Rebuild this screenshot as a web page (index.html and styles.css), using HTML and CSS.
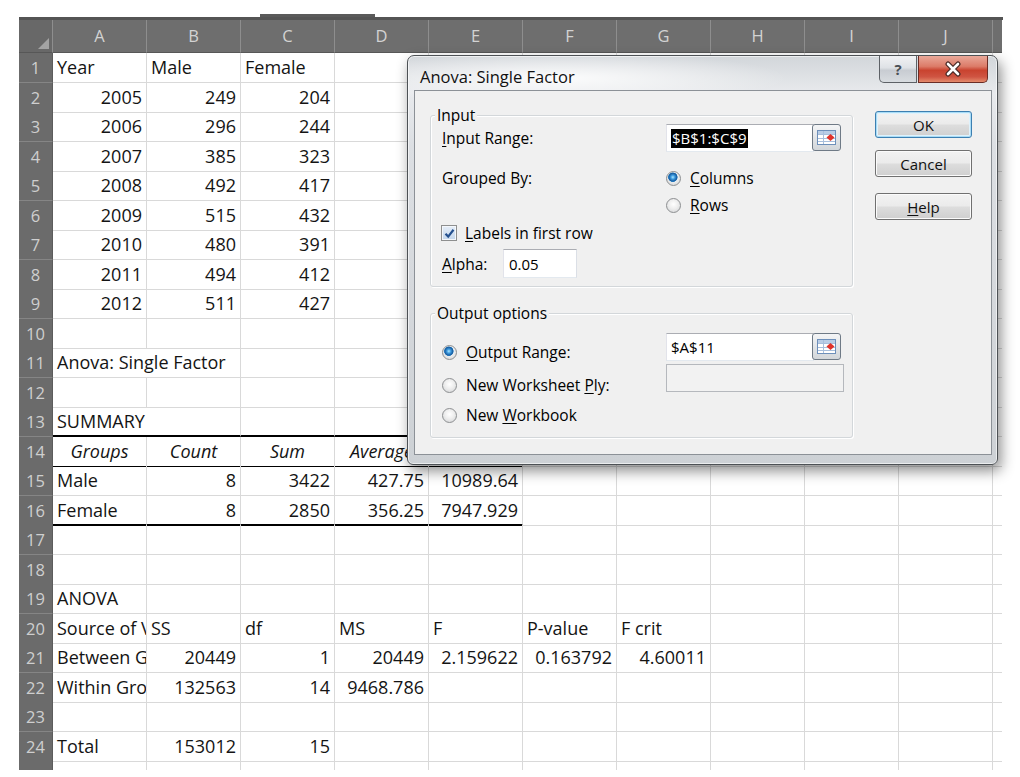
FILE: index.html
```html
<!DOCTYPE html>
<html>
<head>
<meta charset="utf-8">
<title>Anova: Single Factor</title>
<link rel="stylesheet" href="styles.css">
</head>
<body>
<div class="top"><div class="tabedge"></div></div>
<div class="sheet">
  <div class="r hd"><span class="corner"><svg width="11" height="11" viewBox="0 0 11 11"><polygon points="11,0 11,11 0,11" fill="#a3a3a3"/></svg></span><span>A</span><span>B</span><span>C</span><span>D</span><span>E</span><span>F</span><span>G</span><span>H</span><span>I</span><span>J</span><span></span></div>
  <div class="r"><b>1</b><span>Year</span><span>Male</span><span>Female</span><span></span><span></span><span></span><span></span><span></span><span></span><span></span><span></span></div>
  <div class="r"><b>2</b><span class="n">2005</span><span class="n">249</span><span class="n">204</span><span></span><span></span><span></span><span></span><span></span><span></span><span></span><span></span></div>
  <div class="r"><b>3</b><span class="n">2006</span><span class="n">296</span><span class="n">244</span><span></span><span></span><span></span><span></span><span></span><span></span><span></span><span></span></div>
  <div class="r"><b>4</b><span class="n">2007</span><span class="n">385</span><span class="n">323</span><span></span><span></span><span></span><span></span><span></span><span></span><span></span><span></span></div>
  <div class="r"><b>5</b><span class="n">2008</span><span class="n">492</span><span class="n">417</span><span></span><span></span><span></span><span></span><span></span><span></span><span></span><span></span></div>
  <div class="r"><b>6</b><span class="n">2009</span><span class="n">515</span><span class="n">432</span><span></span><span></span><span></span><span></span><span></span><span></span><span></span><span></span></div>
  <div class="r"><b>7</b><span class="n">2010</span><span class="n">480</span><span class="n">391</span><span></span><span></span><span></span><span></span><span></span><span></span><span></span><span></span></div>
  <div class="r"><b>8</b><span class="n">2011</span><span class="n">494</span><span class="n">412</span><span></span><span></span><span></span><span></span><span></span><span></span><span></span><span></span></div>
  <div class="r"><b>9</b><span class="n">2012</span><span class="n">511</span><span class="n">427</span><span></span><span></span><span></span><span></span><span></span><span></span><span></span><span></span></div>
  <div class="r"><b>10</b><span></span><span></span><span></span><span></span><span></span><span></span><span></span><span></span><span></span><span></span><span></span></div>
  <div class="r"><b>11</b><span class="s2">Anova: Single Factor</span><span></span><span></span><span></span><span></span><span></span><span></span><span></span><span></span><span></span></div>
  <div class="r"><b>12</b><span></span><span></span><span></span><span></span><span></span><span></span><span></span><span></span><span></span><span></span><span></span></div>
  <div class="r"><b>13</b><span class="s2 tb">SUMMARY</span><span class="tb"></span><span class="tb"></span><span class="tb"></span><span></span><span></span><span></span><span></span><span></span><span></span></div>
  <div class="r"><b>14</b><span class="h tn">Groups</span><span class="h tn">Count</span><span class="h tn">Sum</span><span class="h tn">Average</span><span class="h tn">Variance</span><span></span><span></span><span></span><span></span><span></span><span></span></div>
  <div class="r"><b>15</b><span>Male</span><span class="n">8</span><span class="n">3422</span><span class="n">427.75</span><span class="n">10989.64</span><span></span><span></span><span></span><span></span><span></span><span></span></div>
  <div class="r"><b>16</b><span class="tb">Female</span><span class="n tb">8</span><span class="n tb">2850</span><span class="n tb">356.25</span><span class="n tb">7947.929</span><span></span><span></span><span></span><span></span><span></span><span></span></div>
  <div class="r"><b>17</b><span></span><span></span><span></span><span></span><span></span><span></span><span></span><span></span><span></span><span></span><span></span></div>
  <div class="r"><b>18</b><span></span><span></span><span></span><span></span><span></span><span></span><span></span><span></span><span></span><span></span><span></span></div>
  <div class="r"><b>19</b><span>ANOVA</span><span></span><span></span><span></span><span></span><span></span><span></span><span></span><span></span><span></span><span></span></div>
  <div class="r"><b>20</b><span>Source of Variation</span><span>SS</span><span>df</span><span>MS</span><span>F</span><span>P-value</span><span>F crit</span><span></span><span></span><span></span><span></span></div>
  <div class="r"><b>21</b><span>Between Groups</span><span class="n">20449</span><span class="n">1</span><span class="n">20449</span><span class="n">2.159622</span><span class="n">0.163792</span><span class="n">4.60011</span><span></span><span></span><span></span><span></span></div>
  <div class="r"><b>22</b><span>Within Groups</span><span class="n">132563</span><span class="n">14</span><span class="n">9468.786</span><span></span><span></span><span></span><span></span><span></span><span></span><span></span></div>
  <div class="r"><b>23</b><span></span><span></span><span></span><span></span><span></span><span></span><span></span><span></span><span></span><span></span><span></span></div>
  <div class="r"><b>24</b><span>Total</span><span class="n">153012</span><span class="n">15</span><span></span><span></span><span></span><span></span><span></span><span></span><span></span><span></span></div>
  <div class="r end"><b></b><span></span><span></span><span></span><span></span><span></span><span></span><span></span><span></span><span></span><span></span><span></span></div>
</div>

<div class="dlg">
  <div class="cap">
    <div class="title">Anova: Single Factor</div>
    <div class="cbtns">
      <div class="cb q">?</div>
      <div class="cb x"><svg width="22" height="16" viewBox="0 0 22 16"><path d="M6 3 L16 13 M16 3 L6 13" stroke="#4a2a26" stroke-width="5" stroke-linecap="round"/><path d="M6 3 L16 13 M16 3 L6 13" stroke="#ffffff" stroke-width="2.6" stroke-linecap="round"/></svg></div>
    </div>
  </div>
  <div class="panel">
    <div class="groups">
      <div class="g g1">
        <div class="lg">Input</div>
        <div class="gb">
          <div class="cl">
            <div class="t lab1"><span><u>I</u>nput Range:</span></div>
            <div class="t lab2"><span>Grouped By:</span></div>
            <div class="t chk"><span class="box"><svg width="13" height="13" viewBox="0 0 13 13"><path d="M2.5 6.8 L5.2 9.6 L10.5 2.8" fill="none" stroke="#24508f" stroke-width="2.2"/></svg></span><span><u>L</u>abels in first row</span></div>
            <div class="alpha"><span class="t al"><span><u>A</u>lpha:</span></span><span class="fld a">0.05</span></div>
          </div>
          <div class="cr">
            <div class="rng"><span class="fld in"><span class="sel">$B$1:$C$9</span></span><span class="pick"><svg width="19" height="15" viewBox="0 0 19 15"><rect x="0.5" y="0.5" width="18" height="14" fill="#fff" stroke="#6d8fba"/><rect x="1" y="1" width="17" height="3" fill="#b9cde6"/><path d="M1 4.5H18M1 8.5H18M1 11.5H18M6.5 1V14" stroke="#a8bfdc"/><path d="M9.5 7.5 L13.5 4 L17.5 7.5 L13.5 11 Z" fill="#e0332b"/></svg></span></div>
            <div class="t opt o1"><span class="rad on"></span><span><u>C</u>olumns</span></div>
            <div class="t opt o2"><span class="rad"></span><span><u>R</u>ows</span></div>
          </div>
        </div>
      </div>
      <div class="g g2">
        <div class="lg">Output options</div>
        <div class="gb">
          <div class="cl">
            <div class="t opt p1"><span class="rad on"></span><span><u>O</u>utput Range:</span></div>
            <div class="t opt p2"><span class="rad"></span><span>New Worksheet <u>P</u>ly:</span></div>
            <div class="t opt p3"><span class="rad"></span><span>New <u>W</u>orkbook</span></div>
          </div>
          <div class="cr">
            <div class="rng r2"><span class="fld in">$A$11</span><span class="pick"><svg width="19" height="15" viewBox="0 0 19 15"><rect x="0.5" y="0.5" width="18" height="14" fill="#fff" stroke="#6d8fba"/><rect x="1" y="1" width="17" height="3" fill="#b9cde6"/><path d="M1 4.5H18M1 8.5H18M1 11.5H18M6.5 1V14" stroke="#a8bfdc"/><path d="M9.5 7.5 L13.5 4 L17.5 7.5 L13.5 11 Z" fill="#e0332b"/></svg></span></div>
            <div class="fld dis"></div>
          </div>
        </div>
      </div>
    </div>
    <div class="btns">
      <div class="btn ok">OK</div>
      <div class="btn cancel">Cancel</div>
      <div class="btn help"><span><u>H</u>elp</span></div>
    </div>
  </div>
</div>
</body>
</html>
```

FILE: styles.css
```css
* { box-sizing: border-box; }

body {
  margin: 0;
  width: 1020px;
  height: 777px;
  overflow: hidden;
  background: #ffffff;
  font-family: "Open Sans", "Noto Sans", sans-serif;
  position: relative;
}

.top {
  height: 17px;
  display: flex;
  align-items: flex-end;
}
.tabedge {
  margin-left: 260px;
  width: 115px;
  height: 3px;
  background: #5a5a5a;
}

.sheet {
  margin-left: 19px;
  width: 984px;
  border-top: 3px solid #545454;
}

.r {
  display: grid;
  grid-template-columns: 34px repeat(10, 94px) 9px;
  height: 29.5px;
}
.r > span {
  border-right: 1px solid #d9d9d9;
  border-bottom: 1px solid #d9d9d9;
  padding: 0 4px;
  line-height: 29px;
  font-size: 18px;
  color: #141414;
  white-space: nowrap;
  overflow: hidden;
}
.r > span:last-child { border-right: 0; }
.r > b {
  background: #6b6b6b;
  color: #cfcfcf;
  font-weight: 400;
  font-size: 16.5px;
  text-align: center;
  line-height: 29px;
  border-bottom: 1px solid #858585;
  border-right: 1px solid #5c5c5c;
}

.r > .n { text-align: right; }
.r > .h { font-style: italic; text-align: center; }
.r > .s2 { grid-column: span 2; }
.r > .tb { border-bottom: 2px solid #000; }
.r > .tn { border-bottom: 1px solid #000; }

.hd { height: 33px; }
.hd > span {
  background: #6e6e6e;
  color: #d3d3d3;
  text-align: center;
  line-height: 32px;
  font-size: 16.5px;
  border-right: 1px solid #8e8e8e;
  border-bottom: 1px solid #575757;
}
.hd > span.corner {
  display: flex;
  align-items: flex-end;
  justify-content: flex-end;
  padding: 0 3px 3px 0;
  background: #686868;
}

.end { height: 8.5px; }
.end > span { border-bottom: 0; }
.end > b { border-bottom: 0; }

/* ---------- dialog ---------- */
.dlg {
  position: absolute;
  left: 407px;
  top: 55px;
  width: 591px;
  height: 410px;
  border: 1px solid #4d5155;
  border-radius: 7px 7px 6px 6px;
  padding: 0 5px 9px 6px;
  display: flex;
  flex-direction: column;
  background:
    radial-gradient(ellipse 230px 26px at 150px 22px, rgba(255,255,255,0.9), rgba(255,255,255,0) 100%),
    linear-gradient(180deg, #d2d6da 0%, #e8eaed 9%, #dcdfe3 22%, #d5d8dc 60%, #cdd1d5 100%);
  box-shadow: 3px 6px 14px rgba(0,0,0,0.45), inset 0 0 0 1px rgba(255,255,255,0.6);
  color: #000;
}

.cap {
  height: 34px;
  display: flex;
  align-items: flex-start;
}
.title {
  flex: 1;
  padding: 10px 0 0 6px;
  line-height: 22px;
  font-size: 16.5px;
  color: #111;
}
.cbtns {
  display: flex;
  gap: 1px;
  margin-right: 4px;
}
.cb {
  height: 27px;
  border: 1px solid #5d6166;
  border-top: 0;
  display: flex;
  align-items: center;
  justify-content: center;
}
.q {
  width: 38px;
  border-radius: 0 0 0 5px;
  background: linear-gradient(180deg, #f1f2f4 0%, #dfe2e6 45%, #c8ccd2 55%, #d8dce0 100%);
  font-weight: 700;
  font-size: 15px;
  color: #4a4f55;
}
.x {
  width: 70px;
  border-color: #6a2c25;
  border-radius: 0 0 5px 0;
  background: linear-gradient(180deg, #e9a899 0%, #dc7b68 40%, #c9432f 55%, #cf5442 80%, #e48a6b 100%);
}

.panel {
  flex: 1;
  border: 1px solid #8c9197;
  background: #f0f0f0;
  display: flex;
  padding-left: 15px;
}

.groups {
  width: 423px;
  display: flex;
  flex-direction: column;
}
.g {
  border: 1px solid #d3d7da;
  border-radius: 3px;
  box-shadow: inset 1px 1px 0 #ffffff, 1px 1px 0 #ffffff;
}
.g1 { margin-top: 24px; }
.g2 { margin-top: 26px; }
.lg {
  margin: -11px 0 -9px 4px;
  padding: 0 2px;
  width: max-content;
  background: #f0f0f0;
  line-height: 20px;
  font-size: 15.5px;
}
.gb {
  display: flex;
  padding-left: 11px;
}
.cl {
  width: 224px;
  display: flex;
  flex-direction: column;
}
.cr {
  display: flex;
  flex-direction: column;
}

.t {
  height: 20px;
  line-height: 20px;
  font-size: 15.5px;
  display: flex;
  align-items: center;
  white-space: nowrap;
}
u { text-underline-offset: 2px; text-decoration-thickness: 1px; }

.lab1 { margin-top: 12px; }
.lab2 { margin-top: 20px; }
.chk { margin-top: 35px; margin-left: -1px; }
.box {
  width: 16px;
  height: 16px;
  margin-right: 8px;
  border: 1px solid #8e8f8f;
  background: linear-gradient(180deg, #e6eef8 0%, #c3d6ec 100%);
  box-shadow: inset 0 0 0 1px #f4f7fb;
  display: flex;
  align-items: center;
  justify-content: center;
}
.alpha {
  margin-top: 6px;
  padding-bottom: 8px;
  display: flex;
  align-items: center;
}
.al { width: 61px; }

.fld {
  height: 28px;
  background: #ffffff;
  border: 1px solid #abadb3;
  border-left-color: #e2e3ea;
  border-right-color: #dbdfe6;
  border-bottom-color: #e3e9ef;
  display: flex;
  align-items: center;
  font-size: 15px;
  padding-left: 4px;
}
.fld.a { width: 74px; height: 29px; padding-left: 5px; }
.rng { display: flex; margin-top: 8px; }
.fld.in { width: 148px; }
.sel {
  background: #000;
  color: #fff;
  padding: 0 1px;
  line-height: 19px;
  font-size: 15px;
}
.pick {
  width: 29px;
  height: 27px;
  margin-left: -2px;
  border: 1px solid #6f7a86;
  border-radius: 3px;
  background: linear-gradient(180deg, #f4f5f6 0%, #e2e5e8 50%, #d2d6da 100%);
  display: flex;
  align-items: center;
  justify-content: center;
}

.o1 { margin-top: 16px; }
.o2 { margin-top: 7px; }

.rad {
  width: 15px;
  height: 15px;
  margin-right: 9px;
  border-radius: 50%;
  border: 1px solid #8d8f91;
  background: radial-gradient(circle at 50% 40%, #ffffff 0, #eeeeee 45%, #cfd1d3 100%);
  flex: none;
}
.rad.on {
  background:
    radial-gradient(circle at 45% 40%, #aee8ff 0, #3c9be0 2px, #1a5c9e 4px, #2b7fc3 4.5px, rgba(0,0,0,0) 5px),
    radial-gradient(circle at 50% 40%, #ffffff 0, #eeeeee 45%, #cfd1d3 100%);
}

.p1 { margin-top: 28px; }
.p2 { margin-top: 13px; }
.p3 { margin-top: 10px; margin-bottom: 12px; }

.r2 { margin-top: 19px; }
.dis {
  margin-top: 3px;
  width: 178px;
  background: #f2f2f2;
  border-color: #b5b8bd;
}

.btns {
  margin-left: 22px;
  margin-top: 20px;
  width: 97px;
  display: flex;
  flex-direction: column;
}
.btn {
  height: 27px;
  border: 1px solid #707070;
  border-radius: 3px;
  background: linear-gradient(180deg, #f2f2f2 0%, #ebebeb 48%, #dddddd 52%, #cfcfcf 100%);
  box-shadow: inset 0 0 0 1px #fbfbfb;
  font-size: 15px;
  display: flex;
  align-items: center;
  justify-content: center;
  color: #111;
}
.ok {
  border-color: #3c7fb1;
  box-shadow: inset 0 0 0 1px #a9dcf6, inset 0 0 0 2px #dff2fc;
}
.cancel { margin-top: 12px; }
.help { margin-top: 16px; }
```
